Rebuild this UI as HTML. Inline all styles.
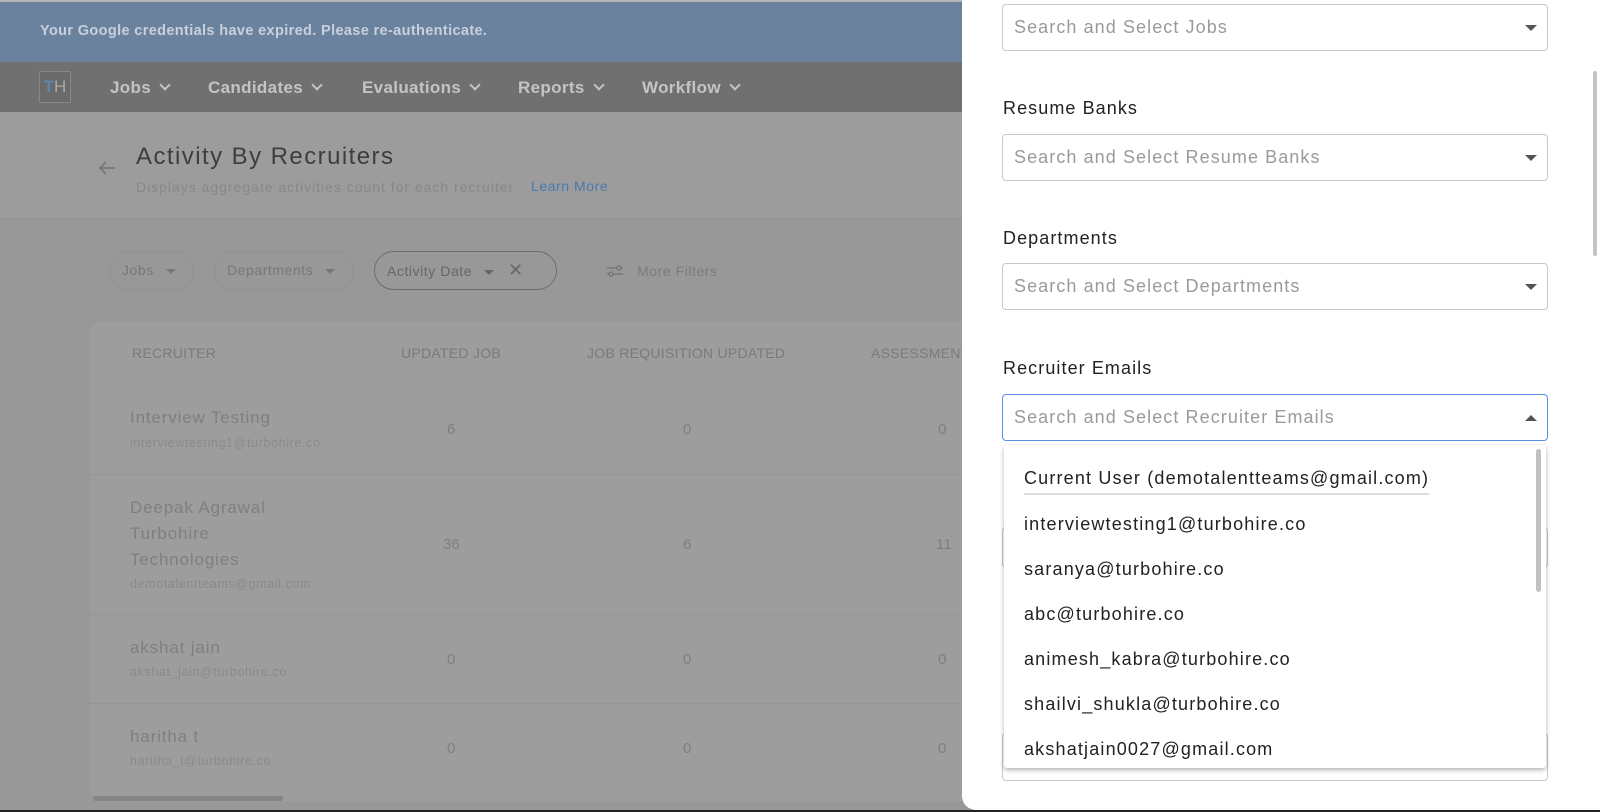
<!DOCTYPE html>
<html><head><meta charset="utf-8"><style>
*{box-sizing:border-box;margin:0;padding:0}
body{width:1600px;height:812px;overflow:hidden;background:#989898;font-family:"Liberation Sans",sans-serif;position:relative}
.a{position:absolute;white-space:nowrap}
.banner{left:0;top:0;width:1600px;height:62px;background:#6b829f;border-top:2px solid #b5b5b5}
.nav{left:0;top:62px;width:1600px;height:50px;background:#6f706f}
.hdr{left:0;top:112px;width:1600px;height:107px;background:#9c9c9c;border-bottom:1px solid #929292}
.navi{color:#c4c4c4;font-size:17px;top:78px;font-weight:bold;letter-spacing:0.02em}
.chev{display:inline-block;width:8px;height:8px;border-right:2px solid #c4c4c4;border-bottom:2px solid #c4c4c4;transform:rotate(45deg);margin-left:10px;position:relative;top:-4px}
.pill{top:251px;height:39px;border:1px solid #929292;border-radius:20px;color:#777;font-size:14px;line-height:37px;padding-left:12px;letter-spacing:0.04em}
.tri{display:inline-block;width:0;height:0;border-left:5px solid transparent;border-right:5px solid transparent;border-top:5px solid #777;margin-left:12px;vertical-align:middle}
.card{left:90px;top:321px;width:900px;height:480px;background:#9d9d9d;border-radius:14px}
.th{top:345px;color:#7a7a7a;font-size:14px;letter-spacing:0.02em}
.nm{color:#7f7f7f;font-size:17px;letter-spacing:0.05em}
.em{color:#8a8a8a;font-size:12.5px;letter-spacing:0.05em}
.v{color:#7f7f7f;font-size:15px}
.div{left:90px;width:870px;height:1px;background:#959595}
.drawer{left:962px;top:0;width:638px;height:810px;background:#fff;border-radius:0 0 0 14px}
.lbl{color:#222;font-size:18px;left:1003px;letter-spacing:0.06em}
.inp{left:1002px;width:546px;height:47px;border:1px solid #c8c8c8;border-radius:4px;color:#9a9a9a;font-size:18px;line-height:45px;padding-left:11px;letter-spacing:0.06em}
.inp .dt{position:absolute;right:10px;top:20px;width:0;height:0;border-left:6px solid transparent;border-right:6px solid transparent;border-top:6px solid #555}
.dd{left:1004px;top:445px;width:542px;height:323px;background:#fff;box-shadow:0 2px 5px rgba(0,0,0,.3);border-radius:3px}
.it{left:1024px;color:#222;font-size:18px;letter-spacing:0.065em}
</style></head><body>
<div class="a banner"></div>
<div class="a" style="left:40px;top:23px;color:#c8d0dc;font-size:14.5px;font-weight:bold;letter-spacing:0.025em">Your Google credentials have expired. Please re-authenticate.</div>
<div class="a nav"></div>
<div class="a" style="left:39px;top:71px;width:32px;height:32px;border:1px solid #888;background:#6a6a6a;border-radius:2px;font-size:17px;line-height:30px;text-align:center;color:#a9a9a9"><span style="color:#5f86a8;font-weight:bold">T</span>H</div>
<div class="a navi" style="left:110px">Jobs<span class="chev"></span></div>
<div class="a navi" style="left:208px">Candidates<span class="chev"></span></div>
<div class="a navi" style="left:362px">Evaluations<span class="chev"></span></div>
<div class="a navi" style="left:518px">Reports<span class="chev"></span></div>
<div class="a navi" style="left:642px">Workflow<span class="chev"></span></div>
<div class="a hdr"></div>
<svg class="a" style="left:97px;top:160px" width="20" height="16" viewBox="0 0 20 16"><path d="M18 8H3M9 2L3 8l6 6" stroke="#777" stroke-width="1.8" fill="none"/></svg>
<div class="a" style="left:136px;top:143px;font-size:24px;color:#3e3e3e;letter-spacing:0.06em">Activity By Recruiters</div>
<div class="a" style="left:136px;top:179px;font-size:14px;color:#878787;letter-spacing:0.07em">Displays aggregate activities count for each recruiter</div>
<div class="a" style="left:531px;top:178px;font-size:14px;color:#4a78b0;letter-spacing:0.04em">Learn More</div>
<div class="a pill" style="left:109px;width:85px">Jobs<span class="tri"></span></div>
<div class="a pill" style="left:214px;width:140px">Departments<span class="tri"></span></div>
<div class="a pill" style="left:374px;width:183px;border-color:#6d6d6d;color:#666">Activity Date<span class="tri" style="border-top-color:#666"></span><span style="margin-left:14px;font-size:18px;color:#666">✕</span></div>
<svg class="a" style="left:606px;top:263px" width="18" height="16" viewBox="0 0 18 16"><path d="M1 5h10M15 5h2M1 11h2M7 11h10" stroke="#777" stroke-width="1.5"/><circle cx="13" cy="5" r="2" stroke="#777" fill="none" stroke-width="1.5"/><circle cx="5" cy="11" r="2" stroke="#777" fill="none" stroke-width="1.5"/></svg>
<div class="a" style="left:637px;top:263px;font-size:14px;color:#7c7c7c;letter-spacing:0.04em">More Filters</div>
<div class="a card"></div>
<div class="a th" style="left:132px">RECRUITER</div>
<div class="a th" style="left:401px">UPDATED JOB</div>
<div class="a th" style="left:587px">JOB REQUISITION UPDATED</div>
<div class="a th" style="left:871px">ASSESSMENT</div>
<div class="a nm" style="left:130px;top:408px">Interview Testing</div>
<div class="a em" style="left:130px;top:436px">interviewtesting1@turbohire.co</div>
<div class="a v" style="left:447px;top:421px">6</div><div class="a v" style="left:683px;top:421px">0</div><div class="a v" style="left:938px;top:421px">0</div>
<div class="a div" style="top:474px"></div>
<div class="a nm" style="left:130px;top:495px;line-height:26px;white-space:normal;width:170px">Deepak Agrawal Turbohire Technologies</div>
<div class="a em" style="left:130px;top:577px">demotalentteams@gmail.com</div>
<div class="a v" style="left:443px;top:536px">36</div><div class="a v" style="left:683px;top:536px">6</div><div class="a v" style="left:936px;top:536px">11</div>
<div class="a div" style="top:614px"></div>
<div class="a nm" style="left:130px;top:638px">akshat jain</div>
<div class="a em" style="left:130px;top:665px">akshat_jain@turbohire.co</div>
<div class="a v" style="left:447px;top:651px">0</div><div class="a v" style="left:683px;top:651px">0</div><div class="a v" style="left:938px;top:651px">0</div>
<div class="a div" style="top:703px"></div>
<div class="a nm" style="left:130px;top:727px">haritha t</div>
<div class="a em" style="left:130px;top:754px">haritha_t@turbohire.co</div>
<div class="a v" style="left:447px;top:740px">0</div><div class="a v" style="left:683px;top:740px">0</div><div class="a v" style="left:938px;top:740px">0</div>
<div class="a" style="left:93px;top:796px;width:190px;height:5px;border-radius:3px;background:#858585"></div>
<div class="a" style="left:0;top:810px;width:1600px;height:2px;background:#222"></div>

<div class="a drawer"></div>
<div class="a inp" style="top:4px">Search and Select Jobs<span class="dt"></span></div>
<div class="a lbl" style="top:98px">Resume Banks</div>
<div class="a inp" style="top:134px">Search and Select Resume Banks<span class="dt"></span></div>
<div class="a lbl" style="top:228px">Departments</div>
<div class="a inp" style="top:263px">Search and Select Departments<span class="dt"></span></div>
<div class="a lbl" style="top:358px">Recruiter Emails</div>
<div class="a inp" style="top:394px;border-color:#5b8de8">Search and Select Recruiter Emails<span class="dt" style="border-top:none;border-bottom:6px solid #555;top:20px"></span></div>
<div class="a" style="left:1002px;top:527px;width:546px;height:41px;border:1px solid #c8c8c8;border-radius:4px"></div>
<div class="a" style="left:1002px;top:733px;width:546px;height:48px;border:1px solid #c8c8c8;border-radius:4px"></div>
<div class="a" style="left:1593px;top:71px;width:4px;height:185px;background:#c4c4c4;border-radius:2px"></div>
<div class="a dd"></div>
<div class="a it" style="top:468px;border-bottom:2px solid #ddd;padding-bottom:4px">Current User (demotalentteams@gmail.com)</div>
<div class="a it" style="top:514px">interviewtesting1@turbohire.co</div>
<div class="a it" style="top:559px">saranya@turbohire.co</div>
<div class="a it" style="top:604px">abc@turbohire.co</div>
<div class="a it" style="top:649px">animesh_kabra@turbohire.co</div>
<div class="a it" style="top:694px">shailvi_shukla@turbohire.co</div>
<div class="a it" style="top:739px">akshatjain0027@gmail.com</div>
<div class="a" style="left:1536px;top:449px;width:5px;height:143px;background:#c1c1c1;border-radius:3px"></div>
</body></html>
